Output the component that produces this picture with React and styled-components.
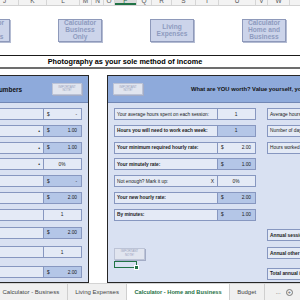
import styled, { createGlobalStyle } from 'styled-components';

const columns = [
  ['J', 28], ['K', 28], ['L', 33], ['M', 12], ['N', 12], ['O', 11], ['P', 22],
  ['Q', 15], ['R', 20], ['S', 24], ['T', 23], ['U', 37], ['V', 12], ['W', 22], ['X', 30],
];

const leftRows = [
  { label: 'Session fee', value: '-', money: true },
  { label: 'Prints', bullet: true, value: '1.00', money: true, dark: true },
  { label: 'Products', bullet: true, value: '1.00', money: true, dark: true },
  { label: 'Tax', bullet: true, value: '0%' },
  { label: 'Costs', value: '-', money: true, dark: true },
  { label: 'Total', value: '2.00', money: true, dark: true },
  { label: 'Sessions', value: '1' },
  { label: 'Weekly', value: '2.00', money: true, dark: true, push: 1 },
  { label: 'Clients', value: '1', push: 3 },
  { label: 'Income', value: '2.00', money: true, dark: true, push: 3 },
];

const worthRows = [
  { label: 'Your average hours spent on each session:', value: '1' },
  { label: 'Hours you will need to work each week:', value: '1', bold: true, dark: true },
  { label: 'Your minimum required hourly rate:', value: '2.00', money: true, bold: true },
  { label: 'Your minutely rate:', value: '1.00', money: true, bold: true, dark: true },
  { label: 'Not enough? Mark it up:', mark: 'X', value: '0%' },
  { label: 'Your new hourly rate:', value: '2.00', money: true, bold: true, dark: true },
  { label: 'By minutes:', value: '1.00', money: true, bold: true, dark: true },
];

const sideRows = [
  { label: 'Average hours per week:' },
  { label: 'Number of days worked:' },
  { label: 'Hours worked per day:' },
  { label: 'Annual sessions:', bold: true, push: 71 },
  { label: 'Annual other income:', bold: true, push: 1 },
  { label: 'Total annual income:', bold: true, push: 4 },
];

const tabs = ['Calculator - Business', 'Living Expenses', 'Calculator - Home and Business', 'Budget'];

const Value = ({ row }) =>
  row.money ? (
    <ValueCell $dark={row.dark} $money>
      <span>$</span>
      <span>{row.value}</span>
    </ValueCell>
  ) : (
    <ValueCell $dark={row.dark}>{row.value}</ValueCell>
  );

const App = () => {
  return (
    <>
      <GlobalStyle />
      <Sheet>
        <ColumnStrip>
          {columns.map(([letter, width]) => (
            <ColumnCell key={letter} $w={width} $active={letter === 'P'}>
              {letter}
            </ColumnCell>
          ))}
        </ColumnStrip>

        <NavRow>
          <NavButton>Calculator Home Expenses</NavButton>
          <NavButton>Calculator Business Only</NavButton>
          <NavButton>Living Expenses</NavButton>
          <NavButton>Calculator Home and Business</NavButton>
        </NavRow>

        <TitleBar>Photography as your sole method of income</TitleBar>

        <Panels>
          <Panel $width={220}>
            <LeftHeader>
              <HeaderTitle>Your Business Numbers</HeaderTitle>
              <NoteBox>
                IMPORTANT
                <br />
                NOTE!
              </NoteBox>
            </LeftHeader>
            <LeftBody>
              {leftRows.map((row) => (
                <Row key={row.label} $push={row.push}>
                  <LabelCell>
                    <span>{row.label}</span>
                    {row.bullet && <Mark>•</Mark>}
                  </LabelCell>
                  <Value row={row} />
                </Row>
              ))}
            </LeftBody>
          </Panel>

          <Panel $width={260}>
            <RightHeader>
              <NoteBox>
                IMPORTANT
                <br />
                NOTE!
              </NoteBox>
              <WorthTitle>What are YOU worth? Value yourself, your time and your talent</WorthTitle>
            </RightHeader>
            <RightBody>
              <Column>
                {worthRows.map((row) => (
                  <Row key={row.label}>
                    <LabelCell $bold={row.bold}>
                      <span>{row.label}</span>
                      {row.mark && <Mark>{row.mark}</Mark>}
                    </LabelCell>
                    <Value row={row} />
                  </Row>
                ))}
                <NoteStack>
                  <NoteBox $wide>
                    IMPORTANT
                    <br />
                    NOTE!
                  </NoteBox>
                  <SelectedCell />
                </NoteStack>
              </Column>
              <Column>
                {sideRows.map((row) => (
                  <Row key={row.label} $push={row.push}>
                    <LabelCell $bold={row.bold}>{row.label}</LabelCell>
                  </Row>
                ))}
              </Column>
            </RightBody>
          </Panel>
        </Panels>

        <TabBar>
          {tabs.map((tab) => (
            <Tab key={tab} $active={tab === 'Calculator - Home and Business'}>
              {tab}
            </Tab>
          ))}
          <TabExtra>...</TabExtra>
          <AddSheet>+</AddSheet>
          <TabExtra $dim>⋮</TabExtra>
        </TabBar>
      </Sheet>
    </>
  );
};

// Styles
const GlobalStyle = createGlobalStyle`
  html, body {
    margin: 0;
    padding: 0;
    background: #fff;
  }
  body {
    font-family: 'Liberation Sans', Arial, sans-serif;
    overflow: hidden;
  }
`;

const Sheet = styled.div`
  width: 300px;
  height: 300px;
  overflow: hidden;
  display: flex;
  flex-direction: column;
  background: #fff;
`;

const ColumnStrip = styled.div`
  flex: none;
  display: flex;
  height: 5px;
  margin-left: -9px;
  background: #f3f3f3;
  border-bottom: 1px solid #d2d2d2;
`;

const ColumnCell = styled.div`
  flex: none;
  width: ${(p) => p.$w}px;
  box-sizing: border-box;
  border-right: 1px solid #d6d6d6;
  display: flex;
  justify-content: center;
  align-items: flex-end;
  overflow: hidden;
  font-size: 6.5px;
  line-height: 8px;
  color: ${(p) => (p.$active ? '#1e6b40' : '#555')};
  background: ${(p) => (p.$active ? '#dcdcdc' : 'transparent')};
  box-shadow: ${(p) => (p.$active ? 'inset 0 -2px 0 #217346' : 'none')};
`;

const NavRow = styled.div`
  flex: none;
  display: flex;
  gap: 48px;
  margin: 13px 0 0 -34px;
`;

const NavButton = styled.div`
  flex: none;
  width: 44px;
  height: 23px;
  box-sizing: border-box;
  background: #ccd4ea;
  border: 1px solid #8e99ba;
  box-shadow: 1px 1px 0 #b3bbd2;
  display: flex;
  align-items: center;
  justify-content: center;
  text-align: center;
  font-weight: bold;
  font-size: 6.6px;
  line-height: 6.8px;
  color: #8e9bbf;
`;

const TitleBar = styled.div`
  flex: none;
  margin-top: 13px;
  height: 14px;
  box-sizing: border-box;
  border-top: 1px solid #1a1a1a;
  border-bottom: 2px solid #6d6d6d;
  padding-right: 50px;
  display: flex;
  align-items: center;
  justify-content: center;
  font-weight: bold;
  font-size: 7.3px;
  color: #000;
  white-space: nowrap;
`;

const Panels = styled.div`
  flex: 1;
  min-height: 0;
  display: flex;
  gap: 18px;
  margin: 6px 0 0 -131px;
`;

const Panel = styled.div`
  flex: none;
  width: ${(p) => p.$width}px;
  box-sizing: border-box;
  border: 1.5px solid #262626;
  background: #d9e1f2;
  display: flex;
  flex-direction: column;
`;

const PanelHeader = styled.div`
  flex: none;
  height: 27px;
  box-sizing: border-box;
  background: #8eaadb;
  border-bottom: 1px solid #7187b5;
  display: flex;
  align-items: center;
`;

const LeftHeader = styled(PanelHeader)`
  justify-content: flex-end;
  gap: 30px;
  padding-right: 6px;
`;

const RightHeader = styled(PanelHeader)`
  gap: 48px;
  padding-left: 5px;
`;

const HeaderTitle = styled.div`
  font-weight: bold;
  font-size: 6.4px;
  color: #111;
  white-space: nowrap;
`;

const WorthTitle = styled(HeaderTitle)`
  font-size: 5.8px;
`;

const NoteBox = styled.div`
  flex: none;
  width: ${(p) => (p.$wide ? 31 : 30)}px;
  height: 12px;
  box-sizing: border-box;
  background: #e1e5ef;
  border: 1px solid #bcc3d6;
  box-shadow: 1px 1px 0 #a3acc6;
  display: flex;
  align-items: center;
  justify-content: center;
  text-align: center;
  font-size: 3px;
  line-height: 3.3px;
  color: #98a1bb;
`;

const LeftBody = styled.div`
  display: flex;
  flex-direction: column;
  gap: 4.8px;
  padding: 5px 6px 0 7px;
`;

const RightBody = styled.div`
  flex: 1;
  display: grid;
  grid-template-columns: 142px 80px;
  gap: 11px;
  align-items: start;
  padding: 5px 0 0 6px;
`;

const Column = styled.div`
  display: flex;
  flex-direction: column;
  gap: 4.8px;
`;

const Row = styled.div`
  display: flex;
  height: 12px;
  margin-top: ${(p) => p.$push || 0}px;
`;

const Cell = styled.div`
  box-sizing: border-box;
  height: 12px;
  border: 1px solid #8797c0;
  display: flex;
  align-items: center;
  font-size: 4.8px;
  color: #1a1a1a;
  white-space: nowrap;
  overflow: hidden;
`;

const LabelCell = styled(Cell)`
  flex: 1;
  min-width: 0;
  justify-content: space-between;
  padding: 0 3px 0 2px;
  background: #e4eaf6;
  font-weight: ${(p) => (p.$bold ? 'bold' : 'normal')};
`;

const ValueCell = styled(Cell)`
  flex: none;
  width: 39px;
  margin-left: -1px;
  padding: 0 4px 0 3px;
  justify-content: ${(p) => (p.$money ? 'space-between' : 'center')};
  background: ${(p) => (p.$dark ? '#b4c6e7' : '#e4eaf6')};
`;

const Mark = styled.span`
  font-weight: normal;
  font-size: 5px;
`;

const NoteStack = styled.div`
  display: flex;
  flex-direction: column;
  gap: 1px;
  margin-top: 22px;
`;

const SelectedCell = styled.div`
  position: relative;
  width: 23px;
  height: 7px;
  box-sizing: border-box;
  border: 1.5px solid #217346;

  &::after {
    content: '';
    position: absolute;
    right: -3px;
    bottom: -3px;
    width: 3px;
    height: 3px;
    background: #217346;
    border: 1px solid #fff;
  }
`;

const TabBar = styled.div`
  flex: none;
  height: 17px;
  display: flex;
  align-items: stretch;
  margin-left: -5px;
  background: #f0f0f0;
  border-top: 1px solid #d4d4d4;
  box-sizing: border-box;
`;

const Tab = styled.div`
  flex: none;
  display: flex;
  align-items: center;
  padding: 0 ${(p) => (p.$active ? 7 : 7.5)}px;
  border-right: 1px solid #cfcfcf;
  background: ${(p) => (p.$active ? '#fff' : 'transparent')};
  color: ${(p) => (p.$active ? '#1e7145' : '#444')};
  font-weight: ${(p) => (p.$active ? 'bold' : 'normal')};
  font-size: ${(p) => (p.$active ? 5.7 : 6)}px;
  white-space: nowrap;
`;

const TabExtra = styled.div`
  flex: none;
  display: flex;
  align-items: center;
  padding-left: ${(p) => (p.$dim ? 7 : 11)}px;
  font-size: 6px;
  color: ${(p) => (p.$dim ? '#b0b0b0' : '#555')};
`;

const AddSheet = styled.div`
  flex: none;
  align-self: center;
  width: 7px;
  height: 7px;
  margin-left: 5px;
  box-sizing: border-box;
  border: 0.8px solid #777;
  border-radius: 50%;
  display: flex;
  align-items: center;
  justify-content: center;
  font-size: 6px;
  line-height: 6px;
  color: #666;
`;

export default App;
